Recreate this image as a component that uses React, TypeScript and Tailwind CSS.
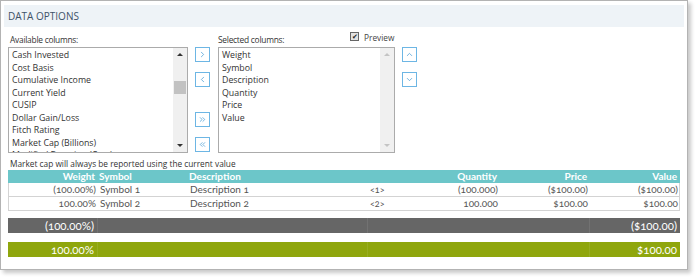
import { ChevronRight, ChevronLeft, ChevronsRight, ChevronsLeft, ChevronUp, ChevronDown } from "lucide-react";

const available = [
  "Cash Invested",
  "Cost Basis",
  "Cumulative Income",
  "Current Yield",
  "CUSIP",
  "Dollar Gain/Loss",
  "Fitch Rating",
  "Market Cap (Billions)",
  "Modified Duration (Cost)",
];

const selected = ["Weight", "Symbol", "Description", "Quantity", "Price", "Value"];

const rows = [
  { weight: "(100.00%)", symbol: "Symbol 1", desc: "Description 1", tag: "<1>", qty: "(100.000)", price: "($100.00)", value: "($100.00)" },
  { weight: "100.00%", symbol: "Symbol 2", desc: "Description 2", tag: "<2>", qty: "100.000", price: "$100.00", value: "$100.00" },
];

function ArrowButton({ children }: { children: React.ReactNode }) {
  return (
    <div className="w-[15px] h-[15px] border border-[#6db6e4] bg-white flex items-center justify-center text-[#2f8fd0]">
      {children}
    </div>
  );
}

function ScrollBar({ thumb }: { thumb: boolean }) {
  return (
    <div className="relative w-[14px] h-full bg-[#f0f0f0] flex flex-col items-center justify-between py-[5px]">
      <div className={`w-0 h-0 border-x-[3px] border-x-transparent border-b-[3px] ${thumb ? "border-b-[#333]" : "border-b-[#c4c4c4]"}`} />
      {thumb && <div className="absolute left-[1px] top-[33px] w-[12px] h-[13px] bg-[#c2c2c2]" />}
      <div className={`w-0 h-0 border-x-[3px] border-x-transparent border-t-[3px] ${thumb ? "border-t-[#333]" : "border-t-[#c4c4c4]"}`} />
    </div>
  );
}

function ListBox({ items, width, thumb }: { items: string[]; width: string; thumb: boolean }) {
  return (
    <div className={`${width} h-[106px] border border-[#ababab] bg-white flex overflow-hidden`}>
      <div className="flex-1 pl-[3px] pt-[1px] overflow-hidden">
        {items.map((item) => (
          <div key={item} className="h-[12.5px] leading-[12.5px] text-[8.8px] text-[#333] whitespace-nowrap">
            {item}
          </div>
        ))}
      </div>
      <ScrollBar thumb={thumb} />
    </div>
  );
}

export default function App() {
  const cellR = "pr-[3px] whitespace-nowrap text-right";
  const cellL = "pl-[1px] whitespace-nowrap";
  return (
    <div className="bg-white w-[697px] h-[280px] [font-family:'Open_Sans',sans-serif]">
      <div className="w-[688px] h-[270px] border border-[#b3b3b3] shadow-[3px_3px_4px_rgba(0,0,0,0.22)] bg-white pt-[4px] px-[3px]">
        <div className="h-[22px] bg-[#eef3f7] flex items-center pl-[4px] text-[10px] text-[#3e5268]">
          DATA OPTIONS
        </div>

        <div className="flex pl-[4px] mt-[7px]">
          <div className="w-[180px]">
            <div className="h-[13px] leading-[12px] text-[8.4px] tracking-[-0.25px] text-[#333] pl-[2px]">Available columns:</div>
            <ListBox items={available} width="w-[180px]" thumb />
          </div>

          <div className="ml-[7px] pt-[13px] flex flex-col">
            <ArrowButton><ChevronRight size={9} strokeWidth={1.75} /></ArrowButton>
            <div className="h-[10px]" />
            <ArrowButton><ChevronLeft size={9} strokeWidth={1.75} /></ArrowButton>
            <div className="h-[25px]" />
            <ArrowButton><ChevronsRight size={9} strokeWidth={1.75} /></ArrowButton>
            <div className="h-[10px]" />
            <ArrowButton><ChevronsLeft size={9} strokeWidth={1.75} /></ArrowButton>
          </div>

          <div className="ml-[8px] w-[177px]">
            <div className="relative h-[13px] flex">
              <div className="leading-[12px] text-[8.4px] tracking-[-0.25px] text-[#333]">Selected columns:</div>
              <div className="absolute left-[132px] -top-[4px] flex items-center gap-[5px]">
                <div className="w-[9px] h-[9px] border border-[#666] bg-[#e2e2e2] flex items-center justify-center text-[7px] leading-none text-[#222]">✔</div>
                <div className="text-[8.3px] text-[#444] leading-[10px] pt-[3px]">Preview</div>
              </div>
            </div>
            <ListBox items={selected} width="w-[177px]" thumb={false} />
          </div>

          <div className="ml-[7px] pt-[13px] flex flex-col">
            <ArrowButton><ChevronUp size={9} strokeWidth={1.75} /></ArrowButton>
            <div className="h-[10px]" />
            <ArrowButton><ChevronDown size={9} strokeWidth={1.75} /></ArrowButton>
          </div>
        </div>

        <div className="pl-[6px] mt-[4px] h-[13px] leading-[13px] text-[8.3px] text-[#333]">
          Market cap will always be reported using the current value
        </div>

        <div className="ml-[4px] w-[672px] [font-family:Lato,sans-serif] oldstyle-nums text-[10px]">
          <div className="grid grid-cols-[90px_90px_180px_42px_90px_90px_90px] h-[13px] leading-[13px] bg-[#6cc6c9] text-white font-bold">
            <div className={cellR}>Weight</div>
            <div className={cellL}>Symbol</div>
            <div className={cellL}>Description</div>
            <div className={cellL}></div>
            <div className={cellR}>Quantity</div>
            <div className={cellR}>Price</div>
            <div className={cellR}>Value</div>
          </div>
          {rows.map((r) => (
            <div
              key={r.symbol}
              className="grid grid-cols-[90px_90px_180px_42px_90px_90px_90px] h-[14px] leading-[13px] border-x border-b border-[#d3d3d3] text-[#555]"
            >
              <div className={cellR}>{r.weight}</div>
              <div className={cellL}>{r.symbol}</div>
              <div className={cellL}>{r.desc}</div>
              <div className={`${cellL} text-[9px]`}>{r.tag}</div>
              <div className={cellR}>{r.qty}</div>
              <div className={cellR}>{r.price}</div>
              <div className={cellR}>{r.value}</div>
            </div>
          ))}

          <div className="mt-[7px] grid grid-cols-[90px_270px_222px_90px] h-[15px] leading-[15px] bg-[#666666] text-white text-[11.5px]">
            <div className={`${cellR} border-r border-[#727272]`}>(100.00%)</div>
            <div className="border-r border-[#727272]" />
            <div className="border-r border-[#727272]" />
            <div className={cellR}>($100.00)</div>
          </div>
          <div className="mt-[9px] grid grid-cols-[90px_270px_222px_90px] h-[15px] leading-[15px] bg-[#8fa60d] text-white text-[11.5px]">
            <div className={`${cellR} border-r border-[#98ad22]`}>100.00%</div>
            <div className="border-r border-[#98ad22]" />
            <div className="border-r border-[#98ad22]" />
            <div className={cellR}>$100.00</div>
          </div>
        </div>
      </div>
    </div>
  );
}
